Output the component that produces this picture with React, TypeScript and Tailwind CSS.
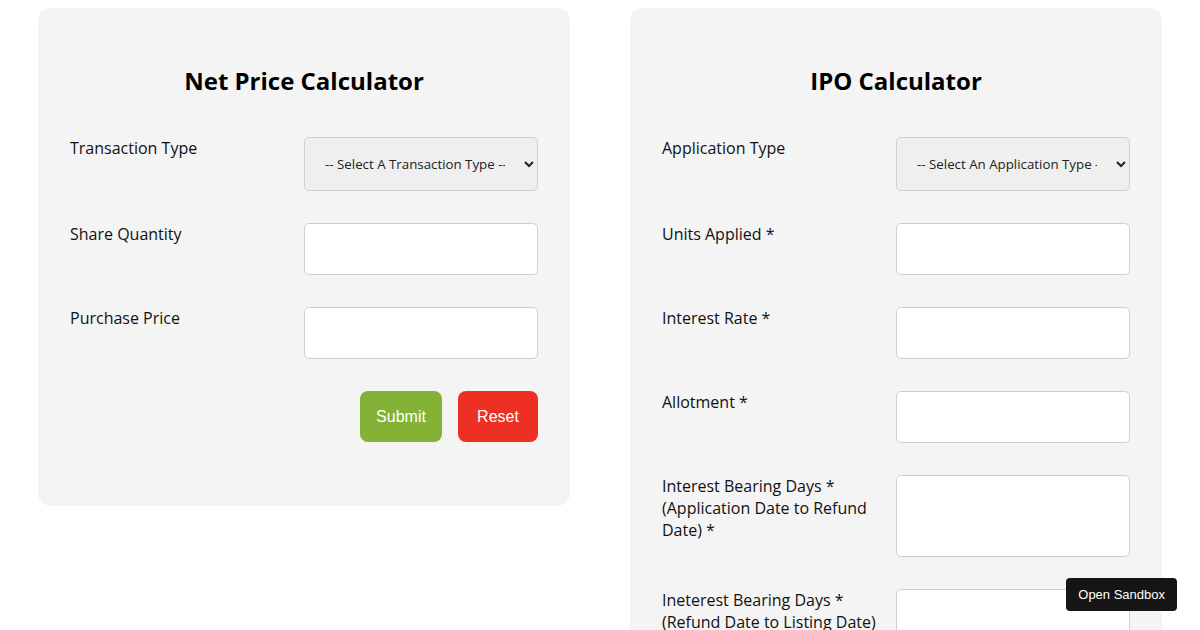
import { ChangeEvent, useState } from 'react'

interface Field {
  label: string
  tall?: boolean
}

const ipoFields: Field[] = [
  { label: 'Units Applied *' },
  { label: 'Interest Rate *' },
  { label: 'Allotment *' },
  { label: 'Interest Bearing Days * (Application Date to Refund Date) *', tall: true },
  { label: 'Ineterest Bearing Days * (Refund Date to Listing Date) *', tall: true },
  { label: 'Total Interest' },
]

const Row = ({ label, children }: { label: string; children: React.ReactNode }) => (
  <div className="grid grid-cols-2 mb-8">
    <label className="pr-4 pb-4 text-base leading-[22px] text-[#111]">{label}</label>
    {children}
  </div>
)

const TextInput = ({ tall }: { tall?: boolean }) => {
  const [value, setValue] = useState('')
  return (
    <input
      type="text"
      value={value}
      onChange={(e: ChangeEvent<HTMLInputElement>) => setValue(e.target.value)}
      className={`w-full ${tall ? 'h-auto' : 'h-[52px]'} min-h-[52px] bg-white border border-[#cfcfcf] rounded-[5px] px-3 outline-none`}
    />
  )
}

const Select = ({ placeholder, options }: { placeholder: string; options: string[] }) => (
  <select
    defaultValue=""
    className="w-full h-[54px] bg-[#efefef] border border-[#cfcfcf] rounded-[5px] px-4 text-[13.3px] text-[#222] [text-align-last:center] outline-none"
  >
    <option value="">{placeholder}</option>
    {options.map((o) => (
      <option key={o} value={o}>
        {o}
      </option>
    ))}
  </select>
)

export default function App() {
  return (
    <div className="min-h-screen bg-white pt-2 font-['Open_Sans',sans-serif]">
      <div className="flex items-start justify-center gap-[60px]">
        {/* NET PRICE */}
        <div className="w-[532px] bg-[#f4f4f4] rounded-[13px] px-8 pt-[57px] pb-16">
          <h2 className="text-2xl font-bold leading-8 text-center text-black mb-10">
            Net Price Calculator
          </h2>
          <Row label="Transaction Type">
            <Select placeholder="-- Select A Transaction Type --" options={['Buy', 'Sell']} />
          </Row>
          <Row label="Share Quantity">
            <TextInput />
          </Row>
          <Row label="Purchase Price">
            <TextInput />
          </Row>
          <div className="flex justify-end gap-4">
            <button className="w-[82px] h-[51px] bg-[#84b236] rounded-lg text-white text-base font-['Liberation_Sans',sans-serif]">
              Submit
            </button>
            <button className="w-[80px] h-[51px] bg-[#ee3024] rounded-lg text-white text-base font-['Liberation_Sans',sans-serif]">
              Reset
            </button>
          </div>
        </div>

        {/* IPO */}
        <div className="w-[532px] bg-[#f4f4f4] rounded-[13px] px-8 pt-[57px] pb-16">
          <h2 className="text-2xl font-bold leading-8 text-center text-black mb-10">
            IPO Calculator
          </h2>
          <Row label="Application Type">
            <Select
              placeholder="-- Select An Application Type --"
              options={['General', 'Employee']}
            />
          </Row>
          {ipoFields.map((f) => (
            <Row key={f.label} label={f.label}>
              <TextInput tall={f.tall} />
            </Row>
          ))}
        </div>
      </div>

      <button className="fixed right-[23px] bottom-[19px] h-[33px] px-3 bg-[#151515] rounded-[4px] text-white text-[13px] font-['Liberation_Sans',sans-serif]">
        Open Sandbox
      </button>
    </div>
  )
}
